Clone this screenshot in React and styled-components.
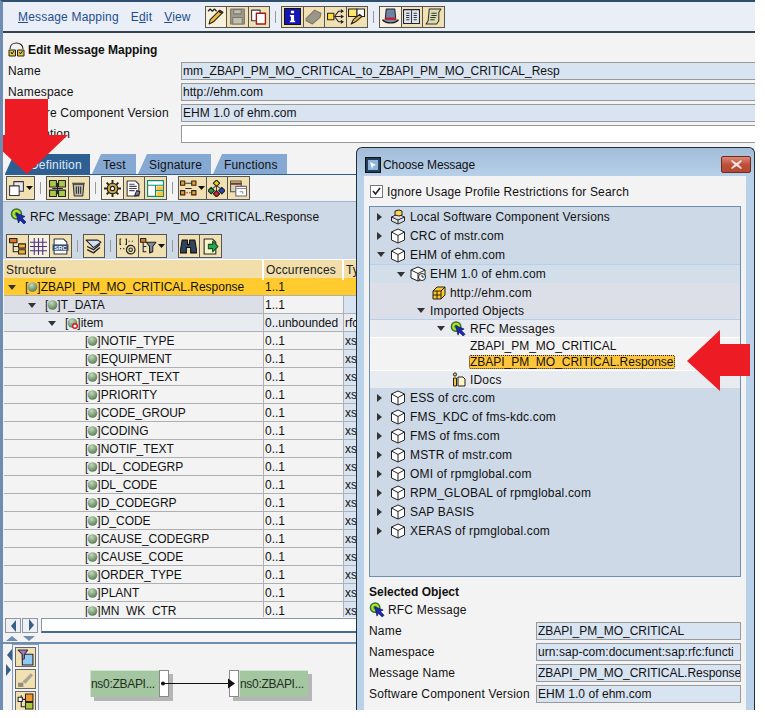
import React from "react";
import styled, { createGlobalStyle } from "styled-components";

const GlobalStyle = createGlobalStyle`
  html, body { margin: 0; padding: 0; background: #fff; }
  body { font-family: "Liberation Sans", Arial, sans-serif; font-size: 12px; color: #111; letter-spacing: 0.18px; }
`;

const Page = styled.div`
  position: relative;
  width: 755px;
  height: 710px;
  box-sizing: border-box;
  border-left: 3px solid #6d8db3;
  border-top: 2px solid #2f4f6f;
  background: #f3f3f3;
  display: flex;
  flex-direction: column;
  overflow: hidden;
`;

const MenuBar = styled.div`
  height: 29px;
  flex: none;
  display: flex;
  align-items: center;
  background: #eaeef7;
  border-bottom: 2px solid #33424f;
  padding-left: 15px;
`;

const MenuItem = styled.span`
  color: #1d4f8f;
  margin-right: ${(p) => p.$gap || 12}px;
  u { text-underline-offset: 1px; }
`;

const MenuTools = styled.div`
  display: flex;
  align-items: center;
  margin-left: 2px;
`;

const Group = styled.div`
  display: flex;
  gap: 1px;
  background: #555;
  padding: 1px;
  height: ${(p) => p.$h || 20}px;
`;

const Tool = styled.div`
  width: ${(p) => p.$w || 20.5}px;
  background: ${(p) => (p.$on ? "#f7f1dc" : "#f0e0b2")};
  display: flex;
  align-items: center;
  justify-content: center;
  gap: 1px;
  svg { display: block; }
`;

const Sep = styled.div`
  width: 1px;
  height: 12px;
  background: #999;
  margin: 0 5px;
`;

const Heading = styled.div`
  display: flex;
  align-items: center;
  gap: 3px;
  height: 25px;
  flex: none;
  padding-left: 5px;
  font-weight: bold;
  letter-spacing: 0;
  margin-top: 4px;
`;

const FormGrid = styled.div`
  display: grid;
  grid-template-columns: ${(p) => p.$label}px 1fr;
  row-gap: 3px;
  flex: none;
  padding-left: ${(p) => p.$pad}px;
`;

const Label = styled.div`
  height: 18px;
  line-height: 19px;
  white-space: nowrap;
`;

const Field = styled.div`
  height: 18px;
  box-sizing: border-box;
  border: 1px solid #999;
  border-width: ${(p) => (p.$open ? "1px 0 1px 1px" : "1px")};
  background: ${(p) => (p.$blank ? "#fff" : "#d9e4f2")};
  padding-left: 1px;
  line-height: 17px;
  letter-spacing: ${(p) => (p.$caps ? "-0.03px" : "0.05px")};
  overflow: hidden;
  white-space: nowrap;
`;

const Tabs = styled.div`
  display: flex;
  height: 20px;
  flex: none;
  margin: 11px 0 0 2px;
  gap: 2px;
  border-bottom: 1px solid #2d5f92;
`;

const Tab = styled.div`
  width: ${(p) => p.$w}px;
  box-sizing: border-box;
  padding-left: ${(p) => p.$pad}px;
  line-height: 22px;
  background: ${(p) => (p.$active ? "#2d5f92" : "#85a9d2")};
  color: ${(p) => (p.$active ? "#dfe9f4" : "#111")};
  clip-path: polygon(0 100%, 9px 0, 100% 0, 100% 100%);
`;

const ToolRow = styled.div`
  height: 26px;
  flex: none;
  box-sizing: border-box;
  display: flex;
  align-items: center;
  padding-left: 3px;
  background: ${(p) => p.$bg || "#f3f3f3"};
`;

const InfoStrip = styled.div`
  height: 32px;
  flex: none;
  box-sizing: border-box;
  display: flex;
  align-items: center;
  gap: 3px;
  padding: 0 0 2px 7px;
  background: #cdd9e7;
  border-top: 1px solid #9fb4cb;
  letter-spacing: 0.04px;
`;

const Table = styled.div`
  height: 357px;
  flex: none;
  overflow: hidden;
  margin-left: 1px;
  border-top: 1px solid #fff;
`;

const HeadRow = styled.div`
  display: grid;
  grid-template-columns: 260px 80px 1fr;
  height: 18px;
  background: #f1deaa;
`;

const HeadCell = styled.div`
  box-sizing: border-box;
  padding-left: 2px;
  line-height: 20px;
  border-right: 2px solid #fff;
  color: #222;
`;

const Row = styled.div`
  display: grid;
  grid-template-columns: 260px 80px 1fr;
  height: 18px;
  box-sizing: border-box;
  border-bottom: 1px solid #aeb0b2;
  background: ${(p) => (p.$selected ? "#ffcb2f" : "transparent")};
`;

const Cell = styled.div`
  display: flex;
  align-items: center;
  box-sizing: border-box;
  padding: 1px 0 0 1px;
  overflow: hidden;
  white-space: nowrap;
  letter-spacing: -0.02px;
  border-right: ${(p) => (p.$selected ? "0" : "1px solid #aeb0b2")};
  background: ${(p) => p.$bg || "transparent"};
`;

const Indent = styled.div`
  flex: none;
  width: ${(p) => p.$w}px;
  display: flex;
  justify-content: flex-end;
  padding-right: 9px;
  box-sizing: border-box;
`;

const Caret = styled.span`
  display: inline-block;
  width: 0;
  height: 0;
  border-style: solid;
  ${(p) =>
    p.$open
      ? "border-width: 5px 4.5px 0 4.5px; border-color: #333 transparent transparent;"
      : "border-width: 4.5px 0 4.5px 5px; border-color: transparent transparent transparent #333;"}
`;

const Bracket = styled.span`
  display: inline-flex;
  align-items: center;
  color: #222;
  font-size: 12px;
  letter-spacing: 0;
  svg { margin: 0 -1px; }
`;

const Scrollbar = styled.div`
  height: 16px;
  flex: none;
  display: flex;
  align-items: flex-end;
  gap: 1px;
  padding-left: 2px;
`;

const ScrollBtn = styled.div`
  width: 16px;
  height: 15px;
  box-sizing: border-box;
  background: #eef0f3;
  border: 1px solid #8a97a6;
  display: flex;
  align-items: center;
  justify-content: center;
`;

const ScrollTrack = styled.div`
  flex: 1;
  height: 15px;
  box-sizing: border-box;
  margin-left: 2px;
  background: #fff;
  border: 1px solid #8a97a6;
  border-bottom: 2px solid #4a6a8c;
`;

const Splitter = styled.div`
  height: 8px;
  flex: none;
  display: flex;
  align-items: flex-end;
  gap: 5px;
  padding: 0 0 1px 3px;
  box-sizing: content-box;
  border-bottom: 2px solid #6f8eae;
`;

const TriUp = styled.span`
  width: 0;
  height: 0;
  border-style: solid;
  border-width: ${(p) => (p.$down ? "5px 6px 0 6px" : "0 6px 5px 6px")};
  border-color: ${(p) => (p.$down ? "#6f8eae transparent transparent" : "transparent transparent #6f8eae")};
`;

const TriSide = styled.span`
  width: 0;
  height: 0;
  border-style: solid;
  border-width: ${(p) => (p.$right ? "6px 0 6px 5px" : "6px 5px 6px 0")};
  border-color: ${(p) =>
    p.$right ? "transparent transparent transparent #3a5f86" : "transparent #3a5f86 transparent transparent"};
  align-self: ${(p) => (p.$right ? "flex-start" : "flex-end")};
  margin-left: ${(p) => (p.$right ? "3px" : "0")};
`;

const Bottom = styled.div`
  flex: 1;
  display: flex;
  min-height: 0;
`;

const SideArrows = styled.div`
  width: 9px;
  padding-top: 5px;
  display: flex;
  flex-direction: column;
  gap: 3px;
  box-sizing: border-box;
`;

const SideBar = styled.div`
  width: 27px;
  box-sizing: border-box;
  border: 1px solid #7f9cbc;
  border-bottom: 0;
  padding: 2px 2px 0;
  display: flex;
  flex-direction: column;
  gap: 2px;
`;

const SideTool = styled.div`
  height: 20px;
  flex: none;
  box-sizing: border-box;
  background: #f0e0b2;
  border: 1px solid #666;
  display: flex;
  align-items: center;
  justify-content: center;
`;

const Canvas = styled.div`
  flex: 1;
  display: flex;
  align-items: flex-start;
  padding: 26px 0 0 51px;
`;

const Node = styled.div`
  display: flex;
  height: 27px;
  box-shadow: 4px 4px 0 #b5b5b5;
`;

const NodeBody = styled.div`
  width: 69px;
  box-sizing: border-box;
  background: #a4c6a0;
  border-top: 1px solid #d3e6cf;
  border-left: 1px solid #cfe3cc;
  line-height: 26px;
  letter-spacing: -0.3px;
  color: #1f2f1f;
`;

const Port = styled.div`
  width: 10px;
  box-sizing: border-box;
  background: #fff;
  border: 1px solid #8a8a8a;
  height: 27px;
`;

const Connector = styled.svg`
  display: block;
  margin: 0 -8px;
  position: relative;
  z-index: 1;
`;

const Dialog = styled.div`
  position: absolute;
  left: 353px;
  top: 145px;
  width: 399px;
  height: 563px;
  box-sizing: border-box;
  display: flex;
  flex-direction: column;
  background: linear-gradient(#a3bcd8, #b9d2ea 30px);
  border: 1px solid #222e3a;
  border-bottom: 0;
  border-radius: 6px 6px 0 0;
  padding: 0 8px 0 7px;
`;

const DialogTitle = styled.div`
  height: 28px;
  box-sizing: border-box;
  padding-top: 5px;
  flex: none;
  display: flex;
  align-items: center;
  gap: 2px;
  margin-left: 1px;
  margin-right: -7px;
  letter-spacing: -0.1px;
`;

const CloseBtn = styled.div`
  margin-left: auto;
  width: 30px;
  height: 17px;
  box-sizing: border-box;
  border: 1px solid #6f2a20;
  border-radius: 2px;
  background: linear-gradient(#d98a78, #c1503a 50%, #b04a34);
  display: flex;
  align-items: center;
  justify-content: center;
  margin-right: 2px;
`;

const DialogBody = styled.div`
  flex: 1;
  background: #f3f3f3;
  padding: 0 5px;
  display: flex;
  flex-direction: column;
`;

const CheckRow = styled.div`
  height: 30px;
  padding-top: 1px;
  box-sizing: border-box;
  flex: none;
  display: flex;
  align-items: center;
  gap: 4px;
  padding-left: 1px;
`;

const CheckBox = styled.div`
  width: 13px;
  height: 13px;
  box-sizing: border-box;
  background: #fff;
  border: 1px solid #777;
  display: flex;
  align-items: center;
  justify-content: center;
`;

const TreeBox = styled.div`
  height: 371px;
  flex: none;
  box-sizing: border-box;
  background: #cdd9e7;
  border: 1px solid #6f8fb2;
  overflow: hidden;
`;

const TreeRow = styled.div`
  height: ${(p) => p.$h || 19}px;
  display: flex;
  align-items: center;
  box-sizing: border-box;
  padding-left: ${(p) => p.$pad}px;
  background: ${(p) => p.$bg || "transparent"};
  border-top: ${(p) => (p.$line ? `1px solid ${p.$line}` : "0")};
  white-space: nowrap;
  letter-spacing: ${(p) => (p.$tight ? "-0.02px" : "inherit")};
`;

const CaretSlot = styled.div`
  width: 13px;
  flex: none;
  display: flex;
  align-items: center;
`;

const IconSlot = styled.div`
  width: ${(p) => p.$w || 20}px;
  flex: none;
  display: flex;
  align-items: center;
`;

const Highlight = styled.span`
  background: #ffc53a;
  outline: 1px dotted #222;
  outline-offset: -1px;
  border-radius: 2px;
  padding: 0 1px;
`;

const SelHeading = styled.div`
  font-weight: bold;
  letter-spacing: 0;
  margin-top: 8px;
  line-height: 15px;
`;

const SelType = styled.div`
  display: flex;
  align-items: center;
  gap: 3px;
  height: 19px;
  margin-bottom: 3px;
`;

const Arrow = styled.svg`
  position: absolute;
  left: ${(p) => p.$x}px;
  top: ${(p) => p.$y}px;
  z-index: 5;
`;

const S = ({ s = 17, children }) => (
  <svg width={s} height={s} viewBox="0 0 16 16" fill="none" strokeLinejoin="round">
    {children}
  </svg>
);

const icons = {
  pencil: (
    <>
      <path d="M1 3l2-2 2 2 2-2 2 2" stroke="#222" strokeWidth="1.2" />
      <path d="M2 15l1-4 8-8 3 2-8 8z" fill="#f5b93a" stroke="#222" />
      <path d="M11 3l3 2 1-1-3-2z" fill="#d33" stroke="#222" />
    </>
  ),
  save: (
    <>
      <rect x="1.5" y="1" width="13" height="14" fill="#a09a88" stroke="#777" />
      <rect x="4.5" y="1.5" width="7" height="4" fill="#c5bfae" stroke="#777" />
      <rect x="3.5" y="9" width="9" height="6" fill="#c5bfae" stroke="#777" />
    </>
  ),
  copy: (
    <>
      <rect x="1.5" y="2" width="8" height="10" fill="#fff" stroke="#334" />
      <rect x="6" y="5" width="8.5" height="10" fill="#fff" stroke="#9a1c1c" strokeWidth="1.3" />
    </>
  ),
  info: (
    <>
      <rect x="0.5" y="0.5" width="15" height="15" fill="#1414b8" stroke="#111" />
      <path d="M6.5 2.5h3v2.5h-3zM5.5 6.5h4V12h1v1.5h-5V12h1V8h-1z" fill="#fff" />
    </>
  ),
  greyBook: <path d="M1 10l8-8 6 3-1 4-7 6-6-3z" fill="#9b9585" stroke="#777" />,
  transport: (
    <>
      <rect x="0.5" y="5" width="6" height="6" fill="#ffd83a" stroke="#222" />
      <path d="M7 8h6M7 8l4-5h2M7 8l4 5h2" stroke="#223" />
      <path d="M13 1l3 2-3 2zM13 6l3 2-3 2zM13 11l3 2-3 2z" fill="#223" />
    </>
  ),
  pair: (
    <>
      <rect x="0.5" y="1" width="8" height="7" fill="#ffe56a" stroke="#222" />
      <rect x="8.5" y="1" width="7" height="7" fill="#fff" stroke="#222" />
      <path d="M3 15l2-4 6-5 2 2-6 5z" fill="#f5b93a" stroke="#222" />
    </>
  ),
  hat: (
    <>
      <path d="M4 1h8l1 10H3z" fill="#6d83a6" stroke="#223" />
      <path d="M3 9h10v2H3z" fill="#d3142a" />
      <path d="M0.5 11c3 4 12 4 15 0" stroke="#223" strokeWidth="1.4" fill="#889" />
    </>
  ),
  book: (
    <>
      <rect x="0.5" y="1.5" width="15" height="13" fill="#dfe6ee" stroke="#223" />
      <path d="M8 2v12M3 5h3M3 7h3M3 9h3M3 11h3M10 5h3M10 7h3M10 9h3M10 11h3" stroke="#334" />
    </>
  ),
  scroll: (
    <>
      <path d="M4 1h11l-2 3v8l-2 3H1l2-3z" fill="#d9dcae" stroke="#333" />
      <path d="M6 5h5M6 7h5M5 9h5M5 11h4" stroke="#333" />
    </>
  ),
  newObj: (
    <>
      <rect x="5.5" y="1.5" width="9" height="9" fill="#e8e8e8" stroke="#334" />
      <rect x="1.5" y="5.5" width="9" height="9" fill="#fff" stroke="#334" />
    </>
  ),
  greenTree: (
    <>
      <path d="M3 3h10M3 13h10M8 3v10M3 8h10" stroke="#223" />
      <rect x="0.5" y="0.5" width="6.5" height="6" fill="#a8c84a" stroke="#222" />
      <rect x="9" y="0.5" width="6.5" height="6" fill="#a8c84a" stroke="#222" />
      <rect x="0.5" y="9.5" width="6.5" height="6" fill="#a8c84a" stroke="#222" />
      <rect x="9" y="9.5" width="6.5" height="6" fill="#a8c84a" stroke="#222" />
    </>
  ),
  trash: (
    <>
      <path d="M3 4h10l-1 11H4z" fill="#b9b9ad" stroke="#333" />
      <path d="M2 3h12M6 6v7M8 6v7M10 6v7" stroke="#333" />
    </>
  ),
  gear: (
    <>
      <path d="M8 0v16M0 8h16M2.5 2.5l11 11M13.5 2.5l-11 11" stroke="#222" strokeWidth="1.8" />
      <circle cx="8" cy="8" r="5" fill="#c8a23c" stroke="#222" />
      <circle cx="8" cy="8" r="2" fill="#fff" stroke="#222" />
    </>
  ),
  doc: (
    <>
      <path d="M2 1h8l3 3v11H2z" fill="#fff" stroke="#334" />
      <path d="M4 4h5M4 6h7M4 8h7M4 10h5" stroke="#445" />
      <path d="M9 15l2-5 3 1-1 3z" fill="#889" stroke="#223" />
    </>
  ),
  layout: (
    <>
      <rect x="0.5" y="0.5" width="15" height="15" fill="#fff" stroke="#0f8a80" strokeWidth="1.2" />
      <path d="M1 5h14M8 5v10M8 10h7" stroke="#0f8a80" />
      <rect x="9" y="6" width="6" height="3.5" fill="#ffc531" />
      <rect x="9" y="11" width="6" height="4" fill="#ffc531" />
    </>
  ),
  redMap: (
    <>
      <path d="M1 12h14" stroke="#c41c1c" strokeDasharray="1.5 1" />
      <path d="M5 3h6M5 8h6" stroke="#334" />
      <rect x="0.5" y="1" width="4" height="4" fill="#f2982a" stroke="#222" />
      <rect x="11" y="1" width="4" height="4" fill="#f2982a" stroke="#222" />
      <rect x="0.5" y="10" width="4" height="4" fill="#f2982a" stroke="#222" />
      <rect x="11" y="10" width="4" height="4" fill="#f2982a" stroke="#222" />
    </>
  ),
  diamond: (
    <>
      <path d="M8 5L2 10M8 5l6 5M8 5v7" stroke="#444" />
      <path d="M8 0l3 3-3 3-3-3z" fill="#f0d020" stroke="#222" />
      <path d="M3 7l3 3-3 3-3-3z" fill="#2a9a3a" stroke="#222" />
      <path d="M13 7l3 3-3 3-3-3z" fill="#2246c8" stroke="#222" />
      <path d="M8 10l3 3-3 3-3-3z" fill="#d3242a" stroke="#222" />
    </>
  ),
  windows: (
    <>
      <rect x="0.5" y="1" width="10" height="10" fill="#d8d2bc" stroke="#554" />
      <path d="M1 3.5h10" stroke="#7a3b1e" strokeWidth="2" />
      <rect x="5.5" y="6" width="10" height="9" fill="#fff" stroke="#667" />
      <path d="M6 8h9M9 11h3v2" stroke="#889" />
    </>
  ),
  tree: (
    <>
      <path d="M4 4v9h5M4 8h5" stroke="#223" />
      <rect x="0.5" y="0.5" width="7" height="4" fill="#e2742a" stroke="#222" />
      <rect x="9" y="5.5" width="6.5" height="4" fill="#f2b52a" stroke="#222" />
      <rect x="9" y="11" width="6.5" height="4" fill="#f2b52a" stroke="#222" />
    </>
  ),
  grid: <path d="M0 4h16M0 8h16M0 12h16M4 0v16M8 0v16M12 0v16" stroke="#4c2f8f" />,
  src: (
    <>
      <path d="M2 1h9l3 3v11H2z" fill="#fff" stroke="#334" />
      <rect x="0.5" y="6" width="15" height="6" fill="#33506f" />
      <text x="8" y="11" textAnchor="middle" fontSize="5.5" fontWeight="bold" fill="#fff" letterSpacing="0">SRC</text>
    </>
  ),
  checks: (
    <>
      <path d="M1 2h11l3 2-7 5z" fill="#cfe0f2" stroke="#223" />
      <path d="M2 8l6 3 6-5M2 11l6 3 6-5" stroke="#223" strokeWidth="1.3" />
    </>
  ),
  at: (
    <>
      <path d="M2 1H1v5h1M6 1h1v5H6M9 3h1M12 3h1M1 10h1M4 10h1" stroke="#222" />
      <circle cx="11" cy="11" r="4" stroke="#222" strokeWidth="1.2" />
      <circle cx="11" cy="11" r="1.6" stroke="#222" />
    </>
  ),
  filterTree: (
    <>
      <path d="M3 4v9h3M3 8h3" stroke="#223" />
      <rect x="0.5" y="0.5" width="5" height="3.5" fill="#e2742a" stroke="#222" />
      <path d="M6 4h9l-3 4v5l-3 1V8z" fill="#7f8c9c" stroke="#222" />
    </>
  ),
  binoculars: <path d="M2 2h5v4h2V2h5l2 12H10V9H6v5H0z" fill="#31445e" stroke="#111" />,
  exportDoc: (
    <>
      <path d="M2 1h8l3 3v11H2z" fill="#f5f5c8" stroke="#223" />
      <path d="M6 6h4V3l5 5-5 5v-3H6z" fill="#27a84a" stroke="#14532a" />
    </>
  ),
  filterWin: (
    <>
      <rect x="5" y="5" width="10" height="10" fill="#8fc8f0" stroke="#223" />
      <path d="M1 1h9L7 5v4L5 10V5z" fill="#a77ab8" stroke="#334" />
    </>
  ),
  eraser: (
    <>
      <path d="M5 10l8-8 2 2-7 8z" fill="#a8a597" />
      <rect x="1" y="11" width="5" height="4" fill="#8f8c80" />
    </>
  ),
  colorTree: (
    <>
      <path d="M4 2v11h4M4 6h4" stroke="#223" />
      <rect x="1" y="4" width="4" height="4" fill="#fff" stroke="#222" />
      <rect x="8" y="1" width="7" height="7" fill="#f2982a" stroke="#222" />
      <rect x="8" y="9" width="7" height="6" fill="#a8c83a" stroke="#222" />
    </>
  ),
};

const Icon = ({ name, s }) => <S s={s}>{icons[name]}</S>;

const DropCaret = () => (
  <svg width="7" height="4" viewBox="0 0 7 4">
    <path d="M0 0h7L3.5 4z" fill="#111" />
  </svg>
);

const ToolGroup = ({ items, h }) => (
  <Group $h={h}>
    {items.map((it) => (
      <Tool key={it.n} $on={it.on} $w={it.drop ? 27 : it.w}>
        <Icon name={it.n} s={it.s} />
        {it.drop && <DropCaret />}
      </Tool>
    ))}
  </Group>
);

const Cube = () => (
  <svg width="16" height="16" viewBox="0 0 16 16" fill="#fff" stroke="#222" strokeLinejoin="round">
    <path d="M8 1l6.5 3v8L8 15l-6.5-3V4z" />
    <path d="M1.5 4L8 7.5 14.5 4M8 7.5V15" fill="none" />
  </svg>
);

const CubeClock = () => (
  <svg width="17" height="16" viewBox="0 0 17 16" fill="#fff" stroke="#222" strokeLinejoin="round">
    <path d="M8 1l7 3v8l-7 3-7-3V4z" />
    <path d="M1 4l7 3.5L15 4M8 7.5V15" fill="none" />
    <circle cx="12" cy="11" r="3.5" />
    <path d="M12 9v2h2" fill="none" />
  </svg>
);

const LocalCube = () => (
  <svg width="16" height="16" viewBox="0 0 16 16" fill="#fff" stroke="#222" strokeLinejoin="round">
    <path d="M8 5l6.5 3v4L8 15l-6.5-3V8z" fill="#dfe3ea" />
    <path d="M5 2l4-1 3 1v4l-3 1-4-1z" fill="#ffd34a" />
    <path d="M1.5 8L8 11l6.5-3M8 11v4" fill="none" />
  </svg>
);

const Namespace = () => (
  <svg width="14" height="14" viewBox="0 0 14 14" stroke="#222" fill="#ffc828" strokeLinejoin="round">
    <path d="M1 5l4-4h8v8l-4 4H1z" />
    <path d="M1 5h8v8M9 5l4-4M5 5v8M1 9h8" fill="none" />
  </svg>
);

const RfcIcon = ({ s = 17 }) => (
  <svg width={s} height={s} viewBox="0 0 17 17" strokeLinejoin="round">
    <circle cx="6.5" cy="6" r="5" fill="#c8d820" stroke="#2a7a3a" strokeWidth="1.6" />
    <circle cx="6.5" cy="6" r="2" fill="#18a858" />
    <path d="M6 5l9 3.5-3 1.5 4 4-2 2-4-4-1.5 3z" fill="#1a2ab0" stroke="#0d1450" strokeWidth="0.7" />
  </svg>
);

const IdocIcon = () => (
  <svg width="14" height="16" viewBox="0 0 14 16" stroke="#222" strokeLinejoin="round">
    <circle cx="3" cy="2.5" r="1.6" fill="#f5c83a" />
    <path d="M1.5 6h3v8h-3z" fill="#f5c83a" />
    <path d="M6 5h5l2 2v7H6z" fill="#fff6c8" />
  </svg>
);

const MappingIcon = () => (
  <svg width="17" height="17" viewBox="0 0 17 17" strokeLinejoin="round">
    <path d="M2 8c0-8 13-8 13 0" fill="none" stroke="#222" strokeWidth="1.1" />
    <rect x="1" y="9" width="6.5" height="6" fill="#e4c93a" stroke="#222" />
    <rect x="9.5" y="9" width="6.5" height="6" fill="#e4c93a" stroke="#222" />
    <path d="M3 11l1 2 2-3M11.5 11l1 2 2-3" stroke="#222" fill="none" />
  </svg>
);

const Ball = ({ flag }) => (
  <Bracket>
    [
    <svg width="11" height="12" viewBox="0 0 11 12">
      <defs>
        <radialGradient id="ballFill" cx="0.4" cy="0.3" r="0.8">
          <stop offset="0" stopColor="#c5d8bc" />
          <stop offset="1" stopColor="#4a7246" />
        </radialGradient>
      </defs>
      <circle cx="5.5" cy="6" r="4.8" fill="url(#ballFill)" />
      {flag && <circle cx="8" cy="9" r="2.3" fill="#fff" stroke="#d3141e" strokeWidth="1.4" />}
    </svg>
    ]
  </Bracket>
);

const fieldNames = [
  "NOTIF_TYPE", "EQUIPMENT", "SHORT_TEXT", "PRIORITY", "CODE_GROUP", "CODING", "NOTIF_TEXT", "DL_CODEGRP",
  "DL_CODE", "D_CODEGRP", "D_CODE", "CAUSE_CODEGRP", "CAUSE_CODE", "ORDER_TYPE", "PLANT", "MN_WK_CTR",
];

const treeTail = [
  "ESS of crc.com", "FMS_KDC of fms-kdc.com", "FMS of fms.com", "MSTR of mstr.com", "OMI of rpmglobal.com",
  "RPM_GLOBAL of rpmglobal.com", "SAP BASIS", "XERAS of rpmglobal.com",
];

const TreeItem = ({ pad, open, caret, icon, slot, text, ...rest }) => (
  <TreeRow $pad={pad} {...rest}>
    {caret && (
      <CaretSlot>
        <Caret $open={open} />
      </CaretSlot>
    )}
    {icon && <IconSlot $w={slot}>{icon}</IconSlot>}
    {text}
  </TreeRow>
);

export default function App() {
  return (
    <Page>
      <GlobalStyle />
      <MenuBar>
        <MenuItem><u>M</u>essage Mapping</MenuItem>
        <MenuItem>E<u>d</u>it</MenuItem>
        <MenuItem $gap={12}><u>V</u>iew</MenuItem>
        <MenuTools>
          <ToolGroup items={[{ n: "pencil", on: true }, { n: "save" }, { n: "copy" }]} />
          <Sep />
          <ToolGroup items={[{ n: "info" }, { n: "greyBook" }, { n: "transport" }, { n: "pair" }]} />
          <Sep />
          <ToolGroup items={[{ n: "hat", on: true }, { n: "book" }, { n: "scroll" }]} />
        </MenuTools>
      </MenuBar>

      <Heading>
        <MappingIcon />
        Edit Message Mapping
      </Heading>
      <FormGrid $label={173} $pad={5}>
        <Label>Name</Label>
        <Field $open $caps>mm_ZBAPI_PM_MO_CRITICAL_to_ZBAPI_PM_MO_CRITICAL_Resp</Field>
        <Label>Namespace</Label>
        <Field $open>http://ehm.com</Field>
        <Label>Software Component Version</Label>
        <Field $open>EHM 1.0 of ehm.com</Field>
        <Label>Description</Label>
        <Field $open $blank />
      </FormGrid>

      <Tabs>
        <Tab $active $w={85} $pad={25}>Definition</Tab>
        <Tab $w={44} $pad={11}>Test</Tab>
        <Tab $w={73} $pad={11}>Signature</Tab>
        <Tab $w={74} $pad={11}>Functions</Tab>
      </Tabs>
      <ToolRow>
        <ToolGroup h={22} items={[{ n: "newObj", drop: true }]} />
        <Sep />
        <ToolGroup h={22} items={[{ n: "greenTree" }, { n: "trash" }]} />
        <Sep />
        <ToolGroup h={22} items={[{ n: "gear", on: true }, { n: "doc" }, { n: "layout" }]} />
        <Sep />
        <ToolGroup h={22} items={[{ n: "redMap", drop: true }, { n: "diamond" }, { n: "windows" }]} />
      </ToolRow>

      <InfoStrip>
        <RfcIcon />
        RFC Message: ZBAPI_PM_MO_CRITICAL.Response
      </InfoStrip>
      <ToolRow $bg="#cdd9e7">
        <ToolGroup h={22} items={[{ n: "tree" }, { n: "grid", on: true }, { n: "src" }]} />
        <Sep />
        <ToolGroup h={22} items={[{ n: "checks" }]} />
        <Sep />
        <ToolGroup h={22} items={[{ n: "at" }, { n: "filterTree", drop: true }]} />
        <Sep />
        <ToolGroup h={22} items={[{ n: "binoculars" }, { n: "exportDoc" }]} />
      </ToolRow>

      <Table>
        <HeadRow>
          <HeadCell>Structure</HeadCell>
          <HeadCell>Occurrences</HeadCell>
          <HeadCell>Type</HeadCell>
        </HeadRow>
        <Row $selected>
          <Cell $selected>
            <Indent $w={20}><Caret $open /></Indent>
            <Ball />ZBAPI_PM_MO_CRITICAL.Response
          </Cell>
          <Cell $selected>1..1</Cell>
          <Cell $selected />
        </Row>
        <Row>
          <Cell $bg="#dcdfe8">
            <Indent $w={40}><Caret $open /></Indent>
            <Ball />T_DATA
          </Cell>
          <Cell>1..1</Cell>
          <Cell $bg="#d9e4f2" />
        </Row>
        <Row>
          <Cell $bg="#e8ebf0">
            <Indent $w={60}><Caret $open /></Indent>
            <Ball flag />item
          </Cell>
          <Cell $bg="#e8ebf0">0..unbounded</Cell>
          <Cell $bg="#e8ebf0">rfc:</Cell>
        </Row>
        {fieldNames.map((f) => (
          <Row key={f}>
            <Cell>
              <Indent $w={80} />
              <Ball />{f}
            </Cell>
            <Cell>0..1</Cell>
            <Cell $bg="#d9e4f2">xsd</Cell>
          </Row>
        ))}
      </Table>
      <Scrollbar>
        <ScrollBtn><TriSide /></ScrollBtn>
        <ScrollBtn><TriSide $right /></ScrollBtn>
        <ScrollTrack />
      </Scrollbar>
      <Splitter>
        <TriUp />
        <TriUp $down />
      </Splitter>
      <Bottom>
        <SideArrows>
          <TriSide />
          <TriSide $right />
        </SideArrows>
        <SideBar>
          <SideTool><Icon name="filterWin" /></SideTool>
          <SideTool><Icon name="eraser" /></SideTool>
          <SideTool><Icon name="colorTree" /></SideTool>
        </SideBar>
        <Canvas>
          <Node>
            <NodeBody>ns0:ZBAPI...</NodeBody>
            <Port />
          </Node>
          <Connector width="76" height="27" viewBox="0 0 76 27">
            <circle cx="2" cy="13.5" r="2" fill="#111" />
            <path d="M2 13.5h68" stroke="#111" />
            <path d="M67 8.5l7 5-7 5z" fill="#111" />
          </Connector>
          <Node>
            <Port />
            <NodeBody>ns0:ZBAPI...</NodeBody>
          </Node>
        </Canvas>
      </Bottom>

      <Dialog>
        <DialogTitle>
          <svg width="16" height="16" viewBox="0 0 16 16">
            <rect x="0.5" y="0.5" width="15" height="15" fill="#23405f" stroke="#111" />
            <rect x="3" y="3" width="10" height="10" fill="#8fb6da" />
            <path d="M5 5l6 3-3 1-1 3z" fill="#fff" />
          </svg>
          Choose Message
          <CloseBtn>
            <svg width="11" height="9" viewBox="0 0 11 9">
              <path d="M1 0l4.5 3L10 0l1 1-3.5 3.5L11 8l-1 1-4.5-3L1 9 0 8l3.5-3.5L0 1z" fill="#f0e4df" />
            </svg>
          </CloseBtn>
        </DialogTitle>
        <DialogBody>
          <CheckRow>
            <CheckBox>
              <svg width="9" height="9" viewBox="0 0 9 9">
                <path d="M1 4l2.5 3L8 1" stroke="#222" strokeWidth="1.6" fill="none" />
              </svg>
            </CheckBox>
            Ignore Usage Profile Restrictions for Search
          </CheckRow>
          <TreeBox>
            <TreeItem pad={7} caret icon={<LocalCube />} text="Local Software Component Versions" />
            <TreeItem pad={7} caret icon={<Cube />} text="CRC of mstr.com" />
            <TreeItem pad={7} caret open icon={<Cube />} text="EHM of ehm.com" />
            <TreeItem pad={27} caret open icon={<CubeClock />} text="EHM 1.0 of ehm.com" $bg="#d3deeb" $line="#b4d0ea" />
            <TreeItem pad={62} slot={18} icon={<Namespace />} text="http://ehm.com" $bg="#dcdfe8" />
            <TreeItem pad={47} caret open text="Imported Objects" $bg="#dcdfe8" $h={17} />
            <TreeItem pad={67} caret open icon={<RfcIcon s={16} />} text="RFC Messages" $bg="#e8ebf0" $h={18} $line="#b4d0ea" />
            <TreeItem pad={100} text="ZBAPI_PM_MO_CRITICAL" $h={17} $tight $bg="#f3f3f3" $line="#fff" />
            <TreeItem pad={99} text={<Highlight>ZBAPI_PM_MO_CRITICAL.Response</Highlight>} $h={16} $tight $bg="#f3f3f3" />
            <TreeItem pad={82} slot={18} icon={<IdocIcon />} text="IDocs" $h={18} $bg="#e8ebf0" $line="#fff" />
            {treeTail.map((t) => (
              <TreeItem key={t} pad={7} caret icon={<Cube />} text={t} />
            ))}
          </TreeBox>
          <SelHeading>Selected Object</SelHeading>
          <SelType>
            <RfcIcon s={16} />
            RFC Message
          </SelType>
          <FormGrid $label={167} $pad={0}>
            <Label>Name</Label>
            <Field $caps>ZBAPI_PM_MO_CRITICAL</Field>
            <Label>Namespace</Label>
            <Field>urn:sap-com:document:sap:rfc:functi</Field>
            <Label>Message Name</Label>
            <Field $caps>ZBAPI_PM_MO_CRITICAL.Response</Field>
            <Label>Software Component Version</Label>
            <Field>EHM 1.0 of ehm.com</Field>
          </FormGrid>
        </DialogBody>
      </Dialog>

      <Arrow $x={-3} $y={97} width="72" height="76" viewBox="0 0 72 76">
        <path d="M5 0h43v36h20L27 75-15 36H5z" fill="#ed1c24" />
      </Arrow>
      <Arrow $x={684} $y={328} width="64" height="62" viewBox="0 0 64 62">
        <path d="M0 31L33 0v14h30v32H33v15z" fill="#ed1c24" />
      </Arrow>
    </Page>
  );
}
